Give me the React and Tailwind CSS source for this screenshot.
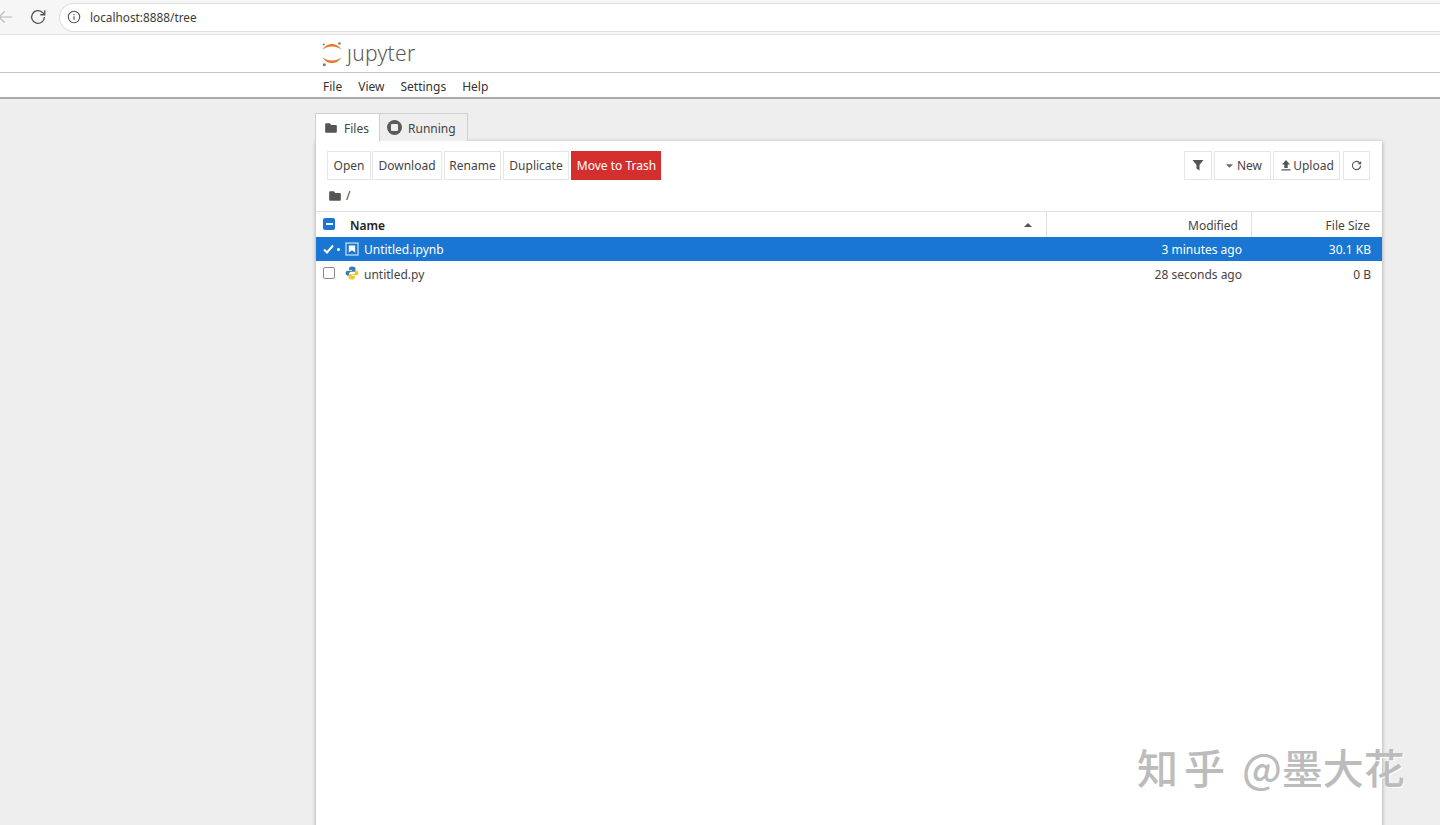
import React from "react";

const Folder = ({ className = "" }) => (
  <svg viewBox="0 0 24 24" className={className} fill="currentColor"><path d="M10 4H3.5A1.5 1.5 0 0 0 2 5.5v13A1.5 1.5 0 0 0 3.5 20h17a1.5 1.5 0 0 0 1.500-1.500v-10A1.500 1.500 0 0 0 20.500 7H12.500z" /></svg>
);

const Logo = () => (
  <svg width="22" height="26" viewBox="0 0 22 26" className="shrink-0">
    <path d="M1.500 8.800C4 4.300 8 2.900 11 2.900s7 1.400 9.500 5.900C17.500 6.400 14.500 5.500 11 5.500S4.500 6.400 1.500 8.800z" fill="#e67a30" />
    <path d="M1.500 16.200C4 20.700 8 22.100 11 22.100s7-1.400 9.500-5.900C17.500 18.600 14.500 19.500 11 19.500S4.500 18.600 1.500 16.200z" fill="#e67a30" />
    <circle cx="18.500" cy="2.500" r="1.300" fill="#7b7b7b" />
    <circle cx="2.800" cy="3.600" r="1" fill="#7b7b7b" />
    <circle cx="3.300" cy="23.800" r="1.500" fill="#7b7b7b" />
  </svg>
);

const Btn = ({ children, className = "" }) => (
  <div className={`h-[29px] flex items-center justify-center border border-[#e6e6e6] bg-white text-[#444] ${className}`}>{children}</div>
);

const Python = () => (
  <svg width="14" height="14" viewBox="0 0 24 24">
    <path d="M11.900 1C8 1 7 2.600 7 4.500V7h5.200v1H4.600C2.500 8 1 9.700 1 12.200c0 2.600 1.300 4.300 3.400 4.300H7v-3c0-2 1.600-3.500 3.600-3.500h5c1.500 0 2.400-1 2.400-2.500V4.500C18 2.500 16 1 11.900 1z" fill="#3b7cb0" />
    <path d="M12.100 23c3.900 0 4.900-1.600 4.900-3.500V17h-5.200v-1h7.600c2.100 0 3.600-1.700 3.600-4.200 0-2.600-1.300-4.300-3.400-4.300H17v3c0 2-1.600 3.500-3.600 3.500h-5C6.900 14 6 15 6 16.500v3c0 2 2 3.500 6.100 3.500z" fill="#f2c832" />
  </svg>
);

export default function App() {
  return (
    <div className="relative h-[825px] overflow-hidden bg-[#eeeeee] text-[13px] text-[#444]" style={{ fontFamily: '"Noto Sans", "Noto Sans CJK SC", sans-serif' }}>
      {/* Browser bar */}
      <div className="h-[35px] flex items-center bg-[#f6f6f6] border-b border-[#e4e4e4]">
        <div className="w-[29px] shrink-0 flex items-center">
          <svg width="14" height="14" viewBox="0 0 14 14" fill="none" stroke="#b5b5b5" strokeWidth="1.100" className="-ml-[2px]"><path d="M14 7H1M6.500 1.500 1 7l5.500 5.500" /></svg>
        </div>
        <svg width="18" height="18" viewBox="0 0 24 24" fill="none" stroke="#555" strokeWidth="1.800" className="shrink-0"><path d="M20.500 12a8.500 8.500 0 1 1-2.500-6L21 9" /><path d="M21 3v6h-6" /></svg>
        <div className="ml-[12px] flex-1 h-[29px] flex items-center rounded-l-full bg-white border border-[#dedede] border-r-0 pl-[7px]">
          <svg width="14" height="14" viewBox="0 0 14 14" fill="none" stroke="#555" strokeWidth="1.100"><circle cx="7" cy="7" r="5.700" /><path d="M7 6.200v3.600M7 4v1.200" /></svg>
          <span className="ml-[9px] mt-[2px] text-[11.800px] text-[#3c3c3c]">localhost:8888/tree</span>
        </div>
      </div>

      {/* Jupyter header */}
      <div className="h-[38px] flex items-center bg-white border-b border-[#c4c4c4] pl-[321px]">
        <Logo />
        <span className="ml-[4px] text-[21px] leading-none text-[#5a5a5a] font-light tracking-[0.3px] -mt-[1px]">ȷupyter</span>
      </div>

      {/* Menu */}
      <div className="h-[26px] flex items-center bg-white border-b-2 border-[#aaaaaa] pl-[323px] text-[12px] text-[#333]">
        <span className="mt-[3px]">File</span>
        <span className="ml-[16px] mt-[3px]">View</span>
        <span className="ml-[16px] mt-[3px]">Settings</span>
        <span className="ml-[16px] mt-[3px]">Help</span>
      </div>

      {/* Tabs */}
      <div className="ml-[315px] mt-[14px] flex h-[28px] items-stretch">
        <div className="relative z-10 w-[65px] h-[29px] flex items-center bg-white border border-[#cfcfcf] border-b-0 pl-[8px] text-[12px]">
          <Folder className="w-[14px] h-[14px] text-[#555]" />
          <span className="ml-[6px] mt-[2px]">Files</span>
        </div>
        <div className="w-[88px] flex items-center bg-[#eeeeee] border border-[#cfcfcf] border-l-0 border-b-0 pl-[7px] text-[12px]">
          <span className="w-[15px] h-[15px] rounded-full bg-[#5a5a5a] flex items-center justify-center"><span className="w-[7px] h-[7px] rounded-[1px] bg-[#eeeeee]" /></span>
          <span className="ml-[6px] mt-[3px]">Running</span>
        </div>
      </div>

      {/* Panel */}
      <div className="ml-[316px] w-[1066px] h-[690px] bg-white shadow-[0_1px_4px_rgba(0,0,0,0.35)]">
        <div className="pt-[10px] pl-[11px] pr-[12px] flex items-center text-[12px]">
          <div className="flex">
            <Btn className="w-[44px]">Open</Btn>
            <Btn className="w-[70px] ml-[1px]">Download</Btn>
            <Btn className="w-[57px] ml-[2px]">Rename</Btn>
            <Btn className="w-[66px] ml-[2px]">Duplicate</Btn>
            <div className="h-[29px] w-[90px] ml-[2px] pl-[1px] flex items-center justify-center bg-[#d32f2f] text-white">Move to Trash</div>
          </div>
          <div className="ml-auto flex">
            <Btn className="w-[28px]">
              <svg width="12" height="12" viewBox="0 0 12 12" fill="#555" className="-mt-[2px]"><path d="M.5 1h11L7.500 6v5.500L4.500 9.500V6z" /></svg>
            </Btn>
            <Btn className="w-[57px] ml-[2px] pl-[3px]">
              <svg width="7" height="4" viewBox="0 0 8 4" fill="#666" className="mr-[4px]"><path d="M0 0h8L4 4z" /></svg>New
            </Btn>
            <Btn className="w-[67px] ml-[2px] pl-[2px]">
              <svg width="10" height="11" viewBox="0 0 10 11" fill="#555" className="mr-[2px]"><path d="M5 0 9 4.500H6.700V8H3.300V4.500H1zM.5 9.300h9v1.200h-9z" /></svg>Upload
            </Btn>
            <Btn className="w-[27px] ml-[3px]">
              <svg width="11" height="11" viewBox="0 0 24 24" fill="none" stroke="#555" strokeWidth="2.400"><path d="M21 12a9 9 0 1 1-2.700-6.400L21 8" /><path d="M21 3v5h-5" /></svg>
            </Btn>
          </div>
        </div>

        {/* Breadcrumb */}
        <div className="h-[31px] flex items-center pl-[12px]">
          <Folder className="w-[14px] h-[14px] text-[#555]" />
          <span className="ml-[4px] text-[12px]">/</span>
        </div>

        {/* Header */}
        <div className="h-[26px] flex items-center border-t border-[#e0e0e0] text-[12px]">
          <div className="w-[731px] h-full flex items-center border-r border-[#e0e0e0] pl-[7px] relative">
            <span className="-mt-[2px] w-[12px] h-[12px] rounded-[2px] bg-[#1976d2] flex items-center justify-center"><span className="w-[7px] h-[2px] bg-white" /></span>
            <span className="ml-[15px] mt-[2px] font-semibold text-[#222]">Name</span>
            <svg width="8" height="4" viewBox="0 0 8 4" fill="#555" className="ml-auto mr-[14px]"><path d="M0 4h8L4 0z" /></svg>
          </div>
          <div className="w-[205px] h-full flex items-center justify-end border-r border-[#e0e0e0] pr-[13px]"><span className="mt-[2px]">Modified</span></div>
          <div className="flex-1 h-full flex items-center justify-end pr-[12px]"><span className="mt-[2px]">File Size</span></div>
        </div>

        {/* Rows */}
        <div className="h-[24px] flex items-center bg-[#1976d2] text-white text-[12px]">
          <svg width="11" height="10" viewBox="0 0 11 10" fill="none" stroke="#fff" strokeWidth="2" className="ml-[7px]"><path d="M1 5.500 4 8.500 10 1.500" /></svg>
          <span className="ml-[3px] w-[3px] h-[3px] rounded-full bg-white" />
          <svg width="14" height="14" viewBox="0 0 14 14" className="ml-[5px]"><rect x="1" y="1" width="12" height="12" fill="none" stroke="#cfe3f6" strokeWidth="1.200" /><path d="M3.800 3.500h6.400v7L7 8.300l-3.200 2.200z" fill="#fff" /></svg>
          <span className="ml-[5px] mt-[2px] flex-1">Untitled.ipynb</span>
          <span className="w-[200px] mt-[2px] text-right pr-[11px]">3 minutes ago</span>
          <span className="w-[129px] mt-[2px] text-right pr-[11px]">30.1 KB</span>
        </div>
        <div className="h-[24px] flex items-center text-[12px]">
          <span className="ml-[7px] w-[12px] h-[12px] rounded-[2px] border border-[#8a8a8a] bg-white" />
          <span className="ml-[10px]"><Python /></span>
          <span className="ml-[5px] mt-[3px] flex-1">untitled.py</span>
          <span className="w-[200px] mt-[3px] text-right pr-[11px]">28 seconds ago</span>
          <span className="w-[129px] mt-[3px] text-right pr-[11px]">0 B</span>
        </div>
      </div>

      {/* Watermark */}
      <div className="absolute left-[1137px] top-[741px] text-[41px] leading-[50px] font-medium text-[#bcbcbc] whitespace-nowrap [text-shadow:1px_1px_0_#ffffff]" style={{ fontFamily: '"Noto Sans CJK SC", sans-serif' }}>
        <span className="tracking-[6px]">知乎</span><span className="ml-[11px]">@墨大花</span>
      </div>
    </div>
  );
}
